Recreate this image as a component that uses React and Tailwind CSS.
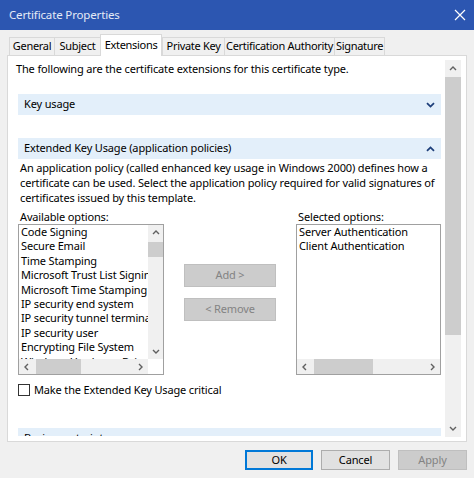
import React from "react";

const font = { fontFamily: '"Segoe UI", "Noto Sans", "Open Sans", sans-serif', letterSpacing: "-0.15px" };

const Chevron = ({ dir = "down", className = "" }) => (
  <svg width="9" height="6" viewBox="0 0 9 6" className={className}>
    {dir === "down" ? (
      <path d="M1 1.2 L4.5 4.6 L8 1.2" fill="none" stroke="currentColor" strokeWidth="1.8" />
    ) : (
      <path d="M1 4.8 L4.5 1.4 L8 4.8" fill="none" stroke="currentColor" strokeWidth="1.8" />
    )}
  </svg>
);

const SmallArrow = ({ dir }) => {
  const paths = {
    up: "M1 5 L4 2 L7 5",
    down: "M1 2 L4 5 L7 2",
    left: "M5 1 L2 4 L5 7",
    right: "M2 1 L5 4 L2 7",
  };
  const vertical = dir === "up" || dir === "down";
  return (
    <svg width={vertical ? 8 : 7} height={vertical ? 7 : 8} viewBox={vertical ? "0 0 8 7" : "0 0 7 8"}>
      <path d={paths[dir]} fill="none" stroke="#606060" strokeWidth="1.4" />
    </svg>
  );
};

const tabs = [
  { name: "General", w: "w-[45px]" },
  { name: "Subject", w: "w-[46px]" },
  { name: "Extensions", w: "w-[62px]" },
  { name: "Private Key", w: "w-[62px]" },
  { name: "Certification Authority", w: "w-[110px]" },
  { name: "Signature", w: "w-[51px]" },
];

const available = [
  "Code Signing",
  "Secure Email",
  "Time Stamping",
  "Microsoft Trust List Signing",
  "Microsoft Time Stamping",
  "IP security end system",
  "IP security tunnel termination",
  "IP security user",
  "Encrypting File System",
  "Windows Hardware Driver Verification",
];

const selected = ["Server Authentication", "Client Authentication"];

const HScroll = ({ thumbLeft, thumbWidth }) => (
  <div className="flex h-[15px] items-center bg-[#f0f0f0]">
    <div className="flex w-[15px] justify-center"><SmallArrow dir="left" /></div>
    <div className="relative h-full flex-1">
      <div className="absolute top-0 h-full bg-[#cdcdcd]" style={{ left: thumbLeft, width: thumbWidth }} />
    </div>
    <div className="flex w-[15px] justify-center"><SmallArrow dir="right" /></div>
  </div>
);

const SectionHeader = ({ title, open }) => (
  <div className="flex h-[21px] w-[423px] items-center justify-between bg-[#e3effa] pl-[6px] pr-[6px]">
    <span className="text-[11px] text-black">{title}</span>
    <Chevron dir={open ? "up" : "down"} className="text-[#1e3f7a]" />
  </div>
);

const DisabledButton = ({ children }) => (
  <div className="flex h-[23px] w-[92px] items-center justify-center border border-[#bfbfbf] bg-[#cccccc] text-[11px] text-[#838383]">
    {children}
  </div>
);

export default function App() {
  return (
    <div className="flex h-[478px] w-[474px] flex-col overflow-hidden bg-[#f0f0f0] text-black" style={font}>
      {/* title bar */}
      <div className="flex h-[30px] items-center justify-between bg-[#2c56b1] pl-[9px] pr-[8px]">
        <span className="text-[11.5px] text-[#e4eaf6]">Certificate Properties</span>
        <svg width="12" height="12" viewBox="0 0 12 12">
          <path d="M1 1 L11 11 M11 1 L1 11" stroke="#ffffff" strokeWidth="1.2" />
        </svg>
      </div>

      {/* tabs */}
      <div className="ml-[9px] mt-[5px] flex h-[20px] items-end">
        {tabs.map((t) => {
          const active = t.name === "Extensions";
          return (
            <div
              key={t.name}
              className={
                active
                  ? `relative z-10 -mb-px flex h-[22px] ${t.w} items-start justify-center whitespace-nowrap border border-b-0 border-[#d9d9d9] bg-white pt-[2px] text-[11px] tracking-[-0.3px]`
                  : `flex h-[18px] ${t.w} items-center justify-center whitespace-nowrap border border-b-0 border-r-0 border-[#d9d9d9] bg-[#f0f0f0] text-[11px] tracking-[-0.3px] last:border-r`
              }
            >
              {t.name}
            </div>
          );
        })}
      </div>

      {/* panel */}
      <div className="ml-[7px] flex h-[387px] w-[460px] border border-[#d9d9d9] bg-white">
        <div className="flex-1 overflow-hidden">
          <div className="pl-[8px] pt-[5px] text-[11px] leading-[15px]">
            The following are the certificate extensions for this certificate type.
          </div>

          <div className="ml-[10px] mt-[18px]">
            <SectionHeader title="Key usage" />
          </div>

          <div className="ml-[10px] mt-[23px]">
            <SectionHeader title="Extended Key Usage (application policies)" open />
          </div>

          <div className="ml-[12px] mt-[1px] w-[424px] text-[11px] leading-[15px]">
            An application policy (called enhanced key usage in Windows 2000) defines how a certificate can be used.
            Select the application policy required for valid signatures of certificates issued by this template.
          </div>

          <div className="ml-[10px] mt-[4px] flex items-end text-[11px]">
            {/* available */}
            <div className="flex w-[146px] flex-col">
              <div className="pl-[2px] leading-[15px]">Available options:</div>
              <div className="flex h-[151px] flex-col border border-[#a0a0a0] bg-white">
                <div className="flex flex-1 overflow-hidden">
                  <div className="flex-1 overflow-hidden whitespace-nowrap pl-[2px] leading-[14.4px]">
                    {available.map((a) => (
                      <div key={a}>{a}</div>
                    ))}
                  </div>
                  <div className="flex w-[15px] flex-col bg-[#f0f0f0]">
                    <div className="flex h-[15px] items-center justify-center"><SmallArrow dir="up" /></div>
                    <div className="relative flex-1">
                      <div className="absolute left-0 right-0 top-[2px] h-[15px] bg-[#cdcdcd]" />
                    </div>
                    <div className="flex h-[15px] items-center justify-center"><SmallArrow dir="down" /></div>
                  </div>
                </div>
                <div className="flex">
                  <div className="flex-1">
                    <HScroll thumbLeft={2} thumbWidth={45} />
                  </div>
                  <div className="w-[15px] bg-white" />
                </div>
              </div>
            </div>

            {/* buttons */}
            <div className="mx-[20px] mb-[54px] flex flex-col gap-[11px]">
              <DisabledButton>Add &gt;</DisabledButton>
              <DisabledButton>&lt; Remove</DisabledButton>
            </div>

            {/* selected */}
            <div className="flex w-[145px] flex-col">
              <div className="pl-[2px] leading-[15px]">Selected options:</div>
              <div className="flex h-[151px] flex-col border border-[#a0a0a0] bg-white">
                <div className="flex-1 overflow-hidden whitespace-nowrap pl-[2px] leading-[14.4px]">
                  {selected.map((s) => (
                    <div key={s}>{s}</div>
                  ))}
                </div>
                <HScroll thumbLeft={2} thumbWidth={59} />
              </div>
            </div>
          </div>

          <label className="ml-[10px] mt-[7px] flex items-center gap-[4px] text-[11px] leading-[15px]">
            <span className="h-[12px] w-[12px] border border-[#333333] bg-white" />
            Make the Extended Key Usage critical
          </label>

          <div className="ml-[10px] mt-[31px] h-[8px] overflow-hidden">
            <SectionHeader title="Basic constraints" />
          </div>
        </div>

        {/* panel scrollbar */}
        <div className="mb-[4px] mr-[5px] mt-[4px] flex w-[16px] flex-col bg-[#f0f0f0]">
          <div className="flex h-[17px] items-center justify-center"><SmallArrow dir="up" /></div>
          <div className="relative flex-1">
            <div className="absolute left-0 right-0 top-0 h-[258px] bg-[#cdcdcd]" />
          </div>
          <div className="flex h-[17px] items-center justify-center"><SmallArrow dir="down" /></div>
        </div>
      </div>

      {/* bottom buttons */}
      <div className="mt-[8px] flex justify-end gap-[8px] pr-[7px] text-[11px]">
        <div className="flex h-[20px] w-[68px] items-center justify-center border-2 border-[#0078d7] bg-[#e1e1e1]">OK</div>
        <div className="flex h-[20px] w-[69px] items-center justify-center border border-[#adadad] bg-[#e1e1e1]">Cancel</div>
        <div className="flex h-[20px] w-[69px] items-center justify-center border border-[#bfbfbf] bg-[#cccccc] text-[#838383]">Apply</div>
      </div>
    </div>
  );
}
